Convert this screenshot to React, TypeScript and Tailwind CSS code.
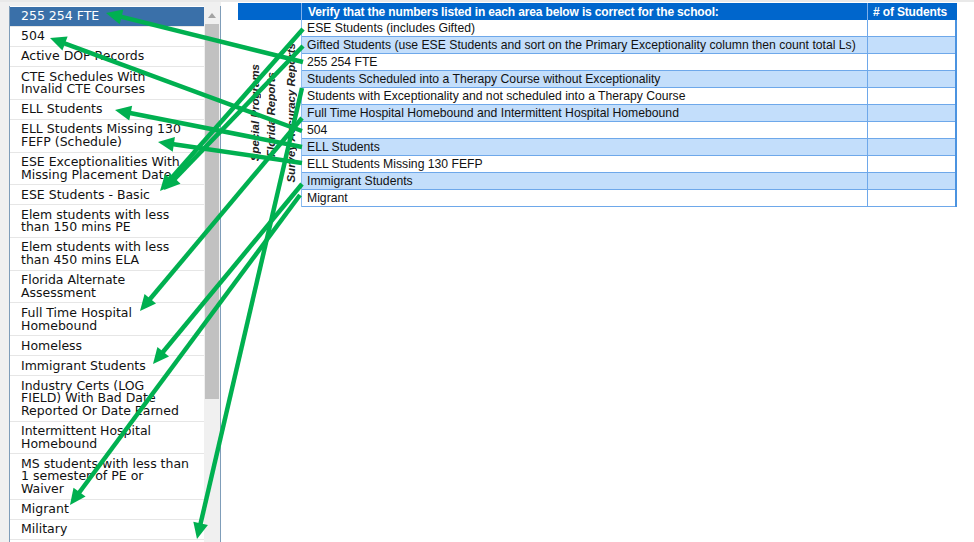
import React from 'react';

const listItems: { lines: string[]; selected?: boolean }[] = [
  { lines: ['255 254 FTE'], selected: true },
  { lines: ['504'] },
  { lines: ['Active DOP Records'] },
  { lines: ['CTE Schedules With', 'Invalid CTE Courses'] },
  { lines: ['ELL Students'] },
  { lines: ['ELL Students Missing 130', 'FEFP (Schedule)'] },
  { lines: ['ESE Exceptionalities With', 'Missing Placement Date'] },
  { lines: ['ESE Students - Basic'] },
  { lines: ['Elem students with less', 'than 150 mins PE'] },
  { lines: ['Elem students with less', 'than 450 mins ELA'] },
  { lines: ['Florida Alternate', 'Assessment'] },
  { lines: ['Full Time Hospital', 'Homebound'] },
  { lines: ['Homeless'] },
  { lines: ['Immigrant Students'] },
  { lines: ['Industry Certs (LOG', 'FIELD) With Bad Date', 'Reported Or Date Earned'] },
  { lines: ['Intermittent Hospital', 'Homebound'] },
  { lines: ['MS students with less than', '1 semester of PE or', 'Waiver'] },
  { lines: ['Migrant'] },
  { lines: ['Military'] },
];

const tableRows = [
  'ESE Students (includes Gifted)',
  'Gifted Students (use ESE Students and sort on the Primary Exceptionality column then count total Ls)',
  '255 254 FTE',
  'Students Scheduled into a Therapy Course without Exceptionality',
  'Students with Exceptionality and not scheduled into a Therapy Course',
  'Full Time Hospital Homebound and Intermittent Hospital Homebound',
  '504',
  'ELL Students',
  'ELL Students Missing 130 FEFP',
  'Immigrant Students',
  'Migrant',
];

// annotation arrows: tail (x1,y1) -> tip (x2,y2)
const arrows = [
  [303, 62, 106, 13],
  [302, 131, 50, 38],
  [302, 147, 115, 110],
  [302, 163, 158, 142],
  [303, 29, 160, 191],
  [303, 46, 164, 190],
  [302, 118, 140, 311],
  [302, 184, 153, 364],
  [300, 195, 70, 505],
  [302, 88, 197, 539],
];

const Arrow = ({ x1, y1, x2, y2 }: { x1: number; y1: number; x2: number; y2: number }) => {
  const dx = x2 - x1;
  const dy = y2 - y1;
  const len = Math.hypot(dx, dy);
  const ux = dx / len;
  const uy = dy / len;
  const L = 16;
  const W = 7.5;
  const bx = x2 - ux * L;
  const by = y2 - uy * L;
  const pts = `${x2},${y2} ${bx - uy * W},${by + ux * W} ${bx + uy * W},${by - ux * W}`;
  return (
    <g>
      <line x1={x1} y1={y1} x2={bx + ux * 2} y2={by + uy * 2} stroke="#00b050" strokeWidth={4.5} />
      <polygon points={pts} fill="#00b050" />
    </g>
  );
};

const ListPanel = () => (
  <div className="w-[221px] h-full shrink-0 bg-[#f0f0f0] pl-[9px] pt-[4px]">
    <div className="h-full flex bg-white border-l border-r border-[#7f9db9]">
      <div className="w-[194px] pt-[1px] overflow-hidden font-['DejaVu_Sans',sans-serif] text-[12.5px] leading-[12.65px] text-[#111]">
        {listItems.map((item, i) => (
          <div
            key={i}
            className={
              item.selected
                ? 'pl-[11px] pt-[3.4px] pb-[3px] border-b border-[#e6e6e6] bg-[#3a70a9] text-white'
                : 'pl-[11px] pt-[3.4px] pb-[3px] border-b border-[#e6e6e6]'
            }
          >
            {item.lines.map((l, j) => (
              <div key={j} className="whitespace-nowrap">
                {l}
              </div>
            ))}
          </div>
        ))}
      </div>
      <div className="w-[16px] bg-[#f0f0f0] flex flex-col">
        <div className="h-[18px] flex items-center justify-center">
          <svg width="8" height="5" viewBox="0 0 8 5">
            <polygon points="4,0 8,5 0,5" fill="#a3a3a3" />
          </svg>
        </div>
        <div className="mx-[1px] h-[375px] bg-[#c1c1c1]" />
      </div>
    </div>
  </div>
);

const RotatedLabel = ({ text, className }: { text: string; className: string }) => (
  <div className={`w-[16px] h-full flex items-end justify-center ${className}`}>
    <span className="[writing-mode:vertical-rl] rotate-180 whitespace-nowrap font-bold italic text-[11.5px] leading-[16px] text-[#222]">
      {text}
    </span>
  </div>
);

const AccuracyTable = () => (
  <div className="w-[719px] ml-[17px] mt-[1px] font-['Liberation_Sans',Arial,sans-serif]">
    <div className="flex h-[17px] bg-[#0066cc] text-white font-bold text-[12px] tracking-[-0.15px]">
      <div className="w-[64px] border-r border-[#7fb0ea]" />
      <div className="w-[566px] pl-[6px] flex items-center border-r border-[#7fb0ea]">
        Verify that the numbers listed in each area below is correct for the school:
      </div>
      <div className="flex-1 pl-[5px] flex items-center"># of Students</div>
    </div>
    <div className="flex">
      <div className="w-[63px] h-[187px] flex pl-[9px] bg-white">
        <RotatedLabel text="Special Programs" className="pb-[46px]" />
        <RotatedLabel text="Florida Reports" className="pb-[50px]" />
        <RotatedLabel text="Survey Accuracy Reports" className="ml-[4px] pb-[24px]" />
      </div>
      <div className="flex-1 border-l border-[#8dbdf0] border-r-2 border-r-[#4b93e0]">
        {tableRows.map((row, i) => (
          <div
            key={i}
            className={
              i % 2 === 1
                ? 'flex h-[17px] border-b-[1.5px] border-[#6ea8ea] bg-[#c3defb]'
                : 'flex h-[17px] border-b-[1.5px] border-[#6ea8ea] bg-white'
            }
          >
            <div className="w-[565px] pl-[5px] flex items-center text-[12.2px] text-[#111] whitespace-nowrap">
              {row}
            </div>
            <div className="flex-1 border-l-[1.5px] border-[#6ea8ea]" />
          </div>
        ))}
      </div>
    </div>
  </div>
);

export default function App() {
  return (
    <div className="relative w-[974px] h-[542px] overflow-hidden bg-white flex flex-col">
      <div className="h-[2px] bg-[#e9e9e9] shrink-0" />
      <div className="flex flex-1 min-h-0 items-start">
        <ListPanel />
        <AccuracyTable />
      </div>
      <svg className="absolute inset-0 pointer-events-none" width="974" height="542">
        {arrows.map(([x1, y1, x2, y2], i) => (
          <Arrow key={i} x1={x1} y1={y1} x2={x2} y2={y2} />
        ))}
      </svg>
    </div>
  );
}
